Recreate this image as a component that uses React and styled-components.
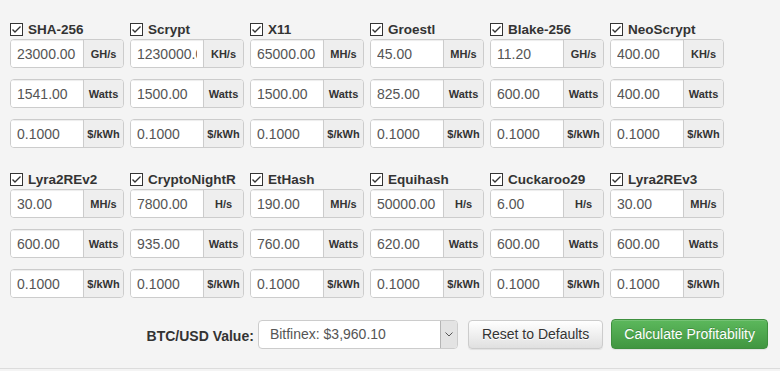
import React from "react";
import styled, { createGlobalStyle } from "styled-components";

const GlobalStyle = createGlobalStyle`
  body {
    margin: 0;
    background: #f4f4f4;
    font-family: "Liberation Sans", Arial, sans-serif;
    color: #333;
  }
`;

const algos = [
  { name: "SHA-256", hash: "23000.00", unit: "GH/s", watts: "1541.00" },
  { name: "Scrypt", hash: "1230000.00", unit: "KH/s", watts: "1500.00" },
  { name: "X11", hash: "65000.00", unit: "MH/s", watts: "1500.00" },
  { name: "Groestl", hash: "45.00", unit: "MH/s", watts: "825.00" },
  { name: "Blake-256", hash: "11.20", unit: "GH/s", watts: "600.00" },
  { name: "NeoScrypt", hash: "400.00", unit: "KH/s", watts: "400.00" },
  { name: "Lyra2REv2", hash: "30.00", unit: "MH/s", watts: "600.00" },
  { name: "CryptoNightR", hash: "7800.00", unit: "H/s", watts: "935.00" },
  { name: "EtHash", hash: "190.00", unit: "MH/s", watts: "760.00" },
  { name: "Equihash", hash: "50000.00", unit: "H/s", watts: "620.00" },
  { name: "Cuckaroo29", hash: "6.00", unit: "H/s", watts: "600.00" },
  { name: "Lyra2REv3", hash: "30.00", unit: "MH/s", watts: "600.00" },
];

const Panel = styled.div`
  padding: 20px 12px 19px 10px;
  border-bottom: 1px solid #dcdcdc;
`;

const Grid = styled.div`
  display: grid;
  grid-template-columns: repeat(6, 114px);
  column-gap: 6px;
  row-gap: 22px;
`;

const Column = styled.div`
  display: flex;
  flex-direction: column;
  gap: 11px;
`;

const AlgoLabel = styled.label`
  display: flex;
  align-items: center;
  height: 19px;
  margin-bottom: -11px;
  font-size: 13.5px;
  font-weight: bold;
  color: #333;
  white-space: nowrap;
`;

const Check = styled.svg`
  width: 13px;
  height: 13px;
  margin-right: 5px;
  flex: none;
`;

const InputGroup = styled.div`
  display: flex;
  height: 29px;
  box-sizing: border-box;
  border: 1px solid #ccc;
  border-radius: 4px;
  overflow: hidden;
  background: #fff;
`;

const Input = styled.input`
  width: 72px;
  flex: none;
  box-sizing: border-box;
  border: 0;
  padding: 0 6px;
  font-family: inherit;
  font-size: 14px;
  color: #555;
  background: #fff;
  box-shadow: inset 0 1px 1px rgba(0, 0, 0, 0.075);
  outline: none;
`;

const Addon = styled.span`
  flex: 1;
  display: flex;
  align-items: center;
  justify-content: center;
  border-left: 1px solid #ccc;
  background: #eee;
  font-size: 11px;
  font-weight: bold;
  color: #333;
  white-space: nowrap;
`;

const Footer = styled.div`
  display: flex;
  justify-content: flex-end;
  align-items: center;
  margin-top: 21px;
  height: 30px;
`;

const FooterLabel = styled.span`
  font-size: 14px;
  font-weight: bold;
  color: #333;
  margin-right: 4px;
  padding-top: 4px;
`;

const Select = styled.div`
  display: flex;
  width: 200px;
  height: 29px;
  box-sizing: border-box;
  border: 1px solid #ccc;
  border-radius: 4px;
  background: #fff;
  overflow: hidden;
  margin-right: 10px;
`;

const SelectText = styled.span`
  flex: 1;
  padding-left: 11px;
  display: flex;
  align-items: center;
  font-size: 14px;
  color: #555;
`;

const SelectArrow = styled.span`
  width: 16px;
  display: flex;
  align-items: center;
  justify-content: center;
  background: #e3e3e3;
  border-left: 1px solid #b5b5b5;
`;

const Button = styled.button`
  height: ${(p) => (p.$primary ? "30px" : "29px")};
  box-sizing: border-box;
  padding: 0 ${(p) => (p.$primary ? "12px" : "13px")};
  margin-left: ${(p) => (p.$primary ? "8px" : "0")};
  border-radius: 4px;
  font-family: inherit;
  font-size: 14px;
  cursor: pointer;
  border: 1px solid ${(p) => (p.$primary ? "#3e8f3e" : "#ccc")};
  color: ${(p) => (p.$primary ? "#fff" : "#333")};
  background: ${(p) =>
    p.$primary
      ? "linear-gradient(to bottom, #5cb85c 0%, #419641 100%)"
      : "linear-gradient(to bottom, #fff 0%, #e0e0e0 100%)"};
  box-shadow: inset 0 1px 0 rgba(255, 255, 255, 0.15),
    0 1px 1px rgba(0, 0, 0, 0.075);
  text-shadow: ${(p) =>
    p.$primary ? "0 -1px 0 rgba(0,0,0,0.2)" : "0 1px 0 #fff"};
`;

const CheckIcon = () => (
  <Check viewBox="0 0 13 13">
    <rect x="0.5" y="0.5" width="12" height="12" fill="#fff" stroke="#333" />
    <polyline
      points="2.5,6.5 5,9 10.5,3.5"
      fill="none"
      stroke="#333"
      strokeWidth="1.4"
    />
  </Check>
);

const Field = ({ value, unit }) => (
  <InputGroup>
    <Input defaultValue={value} />
    <Addon>{unit}</Addon>
  </InputGroup>
);

export default function App() {
  return (
    <Panel>
      <GlobalStyle />
      <Grid>
        {algos.map((a) => (
          <Column key={a.name}>
            <AlgoLabel>
              <CheckIcon />
              {a.name}
            </AlgoLabel>
            <Field value={a.hash} unit={a.unit} />
            <Field value={a.watts} unit="Watts" />
            <Field value="0.1000" unit="$/kWh" />
          </Column>
        ))}
      </Grid>
      <Footer>
        <FooterLabel>BTC/USD Value:</FooterLabel>
        <Select>
          <SelectText>Bitfinex: $3,960.10</SelectText>
          <SelectArrow>
            <svg width="8" height="5" viewBox="0 0 8 5">
              <polyline
                points="0.5,0.5 4,4 7.5,0.5"
                fill="none"
                stroke="#555"
                strokeWidth="1"
              />
            </svg>
          </SelectArrow>
        </Select>
        <Button>Reset to Defaults</Button>
        <Button $primary>Calculate Profitability</Button>
      </Footer>
    </Panel>
  );
}
